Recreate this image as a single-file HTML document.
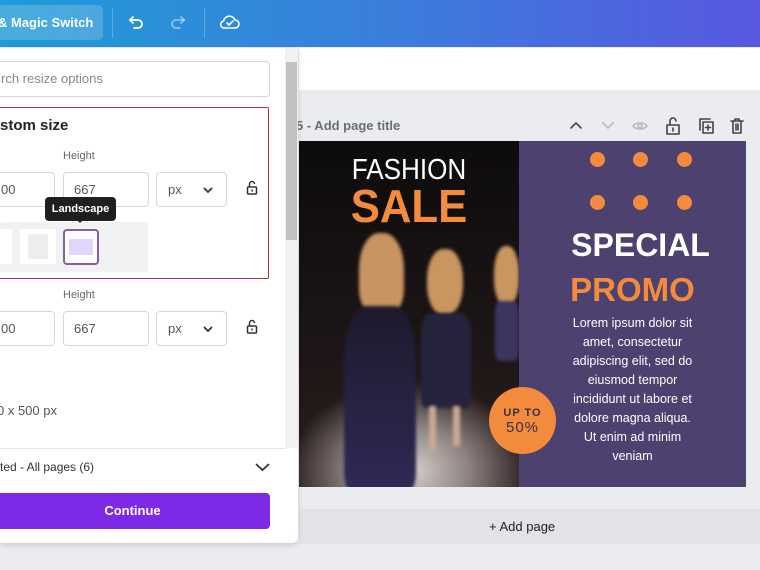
<!DOCTYPE html>
<html><head><meta charset="utf-8"><style>
*{box-sizing:border-box;margin:0;padding:0}
body{width:760px;height:570px;overflow:hidden;background:#ebecf0;font-family:"Liberation Sans",sans-serif;position:relative}
.abs{position:absolute}
.top{left:0;top:0;width:760px;height:47px;background:linear-gradient(90deg,#1f9bd6 0%,#3a7fdc 50%,#5857e0 100%)}
.btn1{left:-10px;top:5px;width:113px;height:35px;background:rgba(255,255,255,.18);border-radius:5px;color:#fff;font-weight:bold;font-size:13px;line-height:35px;padding-left:8px}
.sep{top:8px;width:1px;height:30px;background:rgba(255,255,255,.25)}
.strip{left:299px;top:48px;width:461px;height:42px;background:#fff}
.panel{left:0;top:48px;width:298px;height:495px;background:#fff;box-shadow:0 2px 6px rgba(0,0,0,.15);border-radius:0 0 6px 0}
.inp{border:1px solid #d5d7db;border-radius:4px;background:#fff;font-size:13px;color:#555}
.lbl{font-size:11px;color:#666}
.page{left:299px;top:141px;width:447px;height:346px}
.photo{left:0;top:0;width:220px;height:346px;overflow:hidden;background:radial-gradient(ellipse 120px 90px at 110px 330px,#d8d2cf 0%,#8d8280 50%,rgba(40,30,30,0) 100%),linear-gradient(180deg,#0d0b0c 0%,#1c1515 55%,#2a1e1e 100%)}
.fig{filter:blur(1.5px)}
.purple{left:220px;top:0;width:227px;height:346px;background:#4d4170}
.dot{width:15px;height:15px;border-radius:50%;background:#f28b3c}
.ctr{text-align:center;width:227px;left:0}
</style></head><body>
<div class="abs top"></div>
<div class="abs btn1">&amp; Magic Switch</div>
<div class="abs sep" style="left:112px"></div>
<div class="abs sep" style="left:204px"></div>
<svg class="abs" style="left:126px;top:13px" width="20" height="20" viewBox="0 0 20 20" fill="none" stroke="#fff" stroke-width="1.8" stroke-linecap="round"><path d="M4 7h8a4 4 0 0 1 0 8H8"/><path d="M7 4L4 7l3 3"/></svg>
<svg class="abs" style="left:168px;top:13px" width="20" height="20" viewBox="0 0 20 20" fill="none" stroke="rgba(255,255,255,.45)" stroke-width="1.8" stroke-linecap="round"><path d="M16 7H8a4 4 0 0 0 0 8h4"/><path d="M13 4l3 3-3 3"/></svg>
<svg class="abs" style="left:219px;top:12px" width="22" height="20" viewBox="0 0 22 20" fill="none" stroke="#fff" stroke-width="1.6" stroke-linecap="round"><path d="M6 16h10a4 4 0 0 0 0-8 6 6 0 0 0-11.5 1A3.5 3.5 0 0 0 6 16z"/><path d="M8 11l2 2 4-4"/></svg>
<div class="abs strip"></div>
<div class="abs" style="left:296px;top:118px;font-size:13px;color:#6b6e75;font-weight:bold">5 - Add page title</div>
<svg class="abs" style="left:566px;top:116px" width="180" height="20" viewBox="0 0 180 20" fill="none" stroke-width="1.6" stroke-linecap="round" stroke-linejoin="round">
<path d="M5 12l5-5 5 5" stroke="#444"/>
<path d="M37 7l5 5 5-5" stroke="#bbb"/>
<path d="M67 10c3-4 11-4 14 0c-3 4-11 4-14 0z" stroke="#bbb"/><circle cx="74" cy="10" r="2" stroke="#bbb"/>
<path d="M101 9h12v9h-12z M104 9V5a3 3 0 0 1 6 0" stroke="#444"/><path d="M107 12v3" stroke="#444"/>
<path d="M137 6h10v11h-10z M134 14V3h10" stroke="#444"/><path d="M142 9v5M139.5 11.5h5" stroke="#444"/>
<path d="M165 5h12M169 5V3h4v2M167 5v12h8V5M170 8v6M172 8v6" stroke="#444"/>
</svg>
<div class="abs page">
 <div class="abs photo">
  <div class="abs fig" style="left:60px;top:92px;width:45px;height:80px;border-radius:45% 45% 30% 30%;background:#c89460"></div>
  <div class="abs fig" style="left:45px;top:165px;width:72px;height:185px;background:linear-gradient(#1e1a2c,#2e2a55);border-radius:30% 30% 10% 10%"></div>
  <div class="abs fig" style="left:128px;top:108px;width:36px;height:66px;border-radius:45%;background:#c99660"></div>
  <div class="abs fig" style="left:122px;top:172px;width:50px;height:95px;background:#25233c;border-radius:20% 20% 10% 10%"></div>
  <div class="abs fig" style="left:130px;top:265px;width:7px;height:45px;background:#c9a894"></div>
  <div class="abs fig" style="left:154px;top:265px;width:7px;height:40px;background:#c9a894"></div>
  <div class="abs fig" style="left:195px;top:105px;width:25px;height:60px;border-radius:45%;background:#c99660"></div>
  <div class="abs fig" style="left:196px;top:160px;width:24px;height:60px;background:#3b3560;border-radius:20%"></div>
  <div class="abs" style="left:0;width:220px;top:13px;text-align:center;color:#fff;font-size:29px;transform:scaleX(.9)">FASHION</div>
  <div class="abs" style="left:0;width:220px;top:38px;text-align:center;color:#f28b3c;font-size:46px;font-weight:bold;transform:scaleX(.95)">SALE</div>
 </div>
 <div class="abs purple">
  <div class="abs dot" style="left:71px;top:11px"></div><div class="abs dot" style="left:114px;top:11px"></div><div class="abs dot" style="left:158px;top:11px"></div>
  <div class="abs dot" style="left:71px;top:54px"></div><div class="abs dot" style="left:114px;top:54px"></div><div class="abs dot" style="left:158px;top:54px"></div>
  <div class="abs ctr" style="top:86px;left:8px;color:#fff;font-size:32px;font-weight:bold">SPECIAL</div>
  <div class="abs ctr" style="top:130px;color:#f28b3c;font-size:33px;font-weight:bold">PROMO</div>
  <div class="abs ctr" style="top:173px;color:#fff;font-size:12.5px;line-height:19px">Lorem ipsum dolor sit<br>amet, consectetur<br>adipiscing elit, sed do<br>eiusmod tempor<br>incididunt ut labore et<br>dolore magna aliqua.<br>Ut enim ad minim<br>veniam</div>
 </div>
 <div class="abs" style="left:190px;top:246px;width:67px;height:67px;border-radius:50%;background:#f28b3c;text-align:center;color:#3a2f45">
  <div style="margin-top:20px;font-size:11px;font-weight:bold;letter-spacing:1px">UP TO</div>
  <div style="font-size:15px;letter-spacing:1px">50%</div>
 </div>
</div>
<div class="abs" style="left:299px;top:509px;width:461px;height:35px;background:#e2e3e8;font-size:13px;line-height:35px;color:#222"><span style="position:absolute;left:190px">+ Add page</span></div>
<div class="abs panel">
 <div class="abs inp" style="left:-5px;top:13px;width:275px;height:36px;line-height:34px;padding-left:5px;color:#888">rch resize options</div>
 <div class="abs" style="left:-5px;top:59px;width:274px;height:172px;border:1.5px solid #a8333b;border-radius:2px"></div>
 <div class="abs" style="left:0;top:69px;font-size:15px;font-weight:bold;color:#222">stom size</div>
 <div class="abs lbl" style="left:63px;top:102px">Height</div>
 <div class="abs inp" style="left:-5px;top:124px;width:60px;height:35px;line-height:33px;padding-left:5px">00</div>
 <div class="abs inp" style="left:63px;top:124px;width:86px;height:35px;line-height:33px;padding-left:10px">667</div>
 <div class="abs inp" style="left:156px;top:124px;width:71px;height:35px;line-height:33px;padding-left:11px">px</div>
 <svg class="abs" style="left:203px;top:138px" width="10" height="8" viewBox="0 0 10 8" fill="none" stroke="#333" stroke-width="1.8"><path d="M1 2l4 4 4-4"/></svg>
 <svg class="abs" style="left:246px;top:132px" width="12" height="16" viewBox="0 0 12 16" fill="none" stroke="#333" stroke-width="1.5"><rect x="1.5" y="7" width="9" height="7" rx="1"/><path d="M3.5 7V4a2.5 2.5 0 0 1 5 0"/><path d="M6 9.5v2"/></svg>
 <div class="abs" style="left:0;top:174px;width:148px;height:50px;background:#f1f2f4;border-radius:3px"></div>
 <div class="abs" style="left:-5px;top:181px;width:17px;height:35px;background:#fff;border-radius:3px"></div>
 <div class="abs" style="left:20px;top:181px;width:36px;height:35px;background:#fff;border-radius:3px"><div style="margin:5px 8px;width:20px;height:25px;background:#eceef0"></div></div>
 <div class="abs" style="left:63px;top:181px;width:36px;height:36px;background:#fff;border:2px solid #8a5fa0;border-radius:4px"><div style="margin:8px 4px;width:24px;height:16px;background:#e0d6fb"></div></div>
 <div class="abs" style="left:45px;top:149px;width:71px;height:24px;background:#1f1f22;border-radius:4px;color:#fff;font-size:11px;text-align:center;line-height:24px;font-weight:bold">Landscape</div>
 <div class="abs" style="left:76px;top:171px;width:0;height:0;border-left:4px solid transparent;border-right:4px solid transparent;border-top:4px solid #1f1f22"></div>
 <div class="abs lbl" style="left:63px;top:241px">Height</div>
 <div class="abs inp" style="left:-5px;top:263px;width:60px;height:35px;line-height:33px;padding-left:5px">00</div>
 <div class="abs inp" style="left:63px;top:263px;width:86px;height:35px;line-height:33px;padding-left:10px">667</div>
 <div class="abs inp" style="left:156px;top:263px;width:71px;height:35px;line-height:33px;padding-left:11px">px</div>
 <svg class="abs" style="left:203px;top:277px" width="10" height="8" viewBox="0 0 10 8" fill="none" stroke="#333" stroke-width="1.8"><path d="M1 2l4 4 4-4"/></svg>
 <svg class="abs" style="left:246px;top:271px" width="12" height="16" viewBox="0 0 12 16" fill="none" stroke="#333" stroke-width="1.5"><rect x="1.5" y="7" width="9" height="7" rx="1"/><path d="M3.5 7V4a2.5 2.5 0 0 1 5 0"/><path d="M6 9.5v2"/></svg>
 <div class="abs" style="left:-3px;top:355px;font-size:13px;color:#555">0 x 500 px</div>
 <div class="abs" style="left:285px;top:0;width:13px;height:400px;background:#f1f1f1"></div>
 <div class="abs" style="left:286px;top:14px;width:11px;height:178px;background:#c1c1c1"></div>
 <div class="abs" style="left:0;top:400px;width:285px;height:1px;background:#e5e5e5"></div>
 <div class="abs" style="left:0;top:412px;font-size:12px;color:#333">ted - All pages (6)</div>
 <svg class="abs" style="left:255px;top:414px" width="15" height="10" viewBox="0 0 15 10" fill="none" stroke="#333" stroke-width="1.8"><path d="M1 2l6.5 6L14 2"/></svg>
 <div class="abs" style="left:-5px;top:445px;width:275px;height:36px;background:#7d2ae8;border-radius:4px;color:#fff;font-weight:bold;font-size:13px;text-align:center;line-height:36px">Continue</div>
</div>
</body></html>
